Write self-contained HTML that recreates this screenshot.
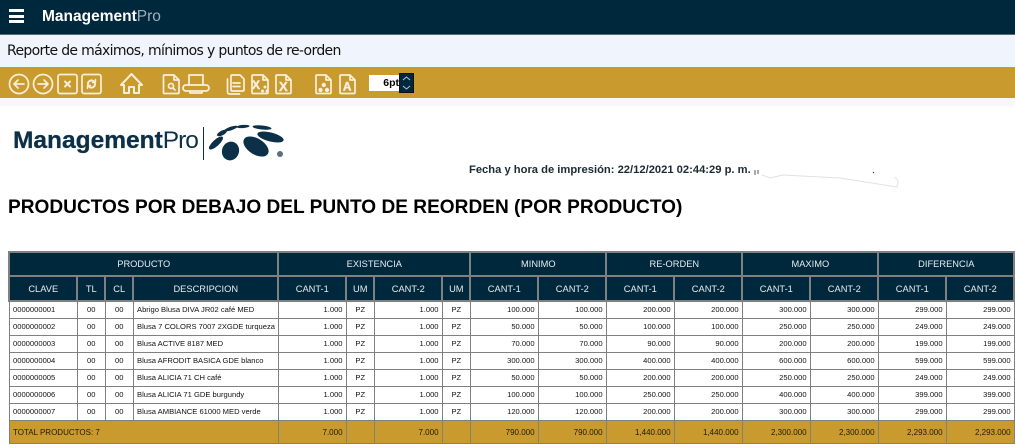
<!DOCTYPE html>
<html><head><meta charset="utf-8"><style>
html,body{margin:0;padding:0;background:#fff}
body{width:1015px;height:448px;overflow:hidden;position:relative;font-family:"Liberation Sans",sans-serif}
.a{position:absolute}
table{position:absolute;left:8px;top:251px;width:1005px;border-collapse:collapse;table-layout:fixed;font-size:7.6px;color:#111}
td,th{border:1px solid #808080;padding:0 3px 0 3.5px;overflow:hidden;white-space:nowrap;height:16px;line-height:16px}
th{background:#00283d;color:#e6ecef;font-weight:normal;font-size:9.3px;border:2px solid #808080;height:22px;text-align:center}
tr.h2 th{height:23px}
.c{text-align:center}.r{text-align:right}
tr.t td{background:#c99a2e;height:21px;padding-top:1px;color:#221b05;font-size:8px}
</style></head><body>
<div class="a" style="left:0;top:0;width:1015px;height:34px;background:#00283d"></div>
<div class="a" style="left:0;top:34px;width:1015px;height:1px;background:#5a6a75"></div>
<div class="a" style="left:0;top:35px;width:1015px;height:32px;background:#f0f4fc"></div>
<div class="a" style="left:0;top:67px;width:1015px;height:31px;background:#c99a2e"></div>
<div class="a" style="left:0;top:98px;width:1015px;height:8px;background:#f8f8f8"></div>
<div class="a" style="left:9px;top:9px;width:15px;height:3px;background:#fff;box-shadow:0 6px 0 #fff,0 11px 0 #fff"></div>
<div class="a" style="left:42px;top:8px;font-size:15.5px;line-height:18px;color:#fff;font-weight:bold;white-space:nowrap">Management<span style="font-weight:normal;color:#9fb0bb">Pro</span></div>
<div class="a" style="left:7px;top:42px;font-size:14px;line-height:18px;color:#111;white-space:nowrap;font-family:'DejaVu Sans',sans-serif;letter-spacing:-.66px">Reporte de máximos, mínimos y puntos de re-orden</div>

<svg class="a" style="left:0;top:67px" width="420" height="31" viewBox="0 67 420 31" fill="none" stroke="#f7efdc" stroke-width="1.7" stroke-linecap="round" stroke-linejoin="round">
<circle cx="19" cy="84" r="9.5"/><path d="M24 84H14M18 80l-4 4 4 4"/>
<circle cx="43" cy="84" r="9.5"/><path d="M38 84H48M44 80l4 4-4 4"/>
<rect x="58" y="74.500" width="19" height="19" rx="2"/><path d="M65 81.500l5 5M70 81.500l-5 5" stroke-width="2"/>
<rect x="82" y="74.500" width="19" height="19" rx="2"/><path d="M88 84a3.500 3.500 0 0 1 6-2.500M95 84a3.500 3.500 0 0 1-6 2.500" stroke-width="2"/><path d="M95.500 79.500v3h-3M87.500 88.500v-3h3" stroke-width="1.400"/>
<path d="M121 85l10.500-11 10.500 11h-3v8h-5v-6h-5v6h-5v-8z" stroke-width="2"/>
<path d="M164.500 75h9.500l5 5v12.500a1 1 0 0 1-1 1h-13.500a1 1 0 0 1-1-1v-16.500a1 1 0 0 1 1-1zM174 75v5h5"/><circle cx="171" cy="86" r="2.500"/><path d="M173 88l2 2"/>
<path d="M189 84v-9h14v9M186 85h20a2 2 0 0 1 0 6h-20a2 2 0 0 1 0-6zM190 91v2h12v-2" stroke-width="1.8"/>
<path d="M232 75h8l4 4v11a1 1 0 0 1-1 1h-11a1 1 0 0 1-1-1v-14a1 1 0 0 1 1-1zM227.500 79v13a2 2 0 0 0 2 2h10M233 83h7M233 86.500h7" stroke-width="1.7"/>
<path d="M253 75h10l5 5v12.500a1 1 0 0 1-1 1h-14a1 1 0 0 1-1-1v-16.500a1 1 0 0 1 1-1zM263 75v5h5"/>
<path d="M277 75h9l5 5v12.500a1 1 0 0 1-1 1h-13a1 1 0 0 1-1-1v-16.500a1 1 0 0 1 1-1zM286 75v5h5"/>
<path d="M317 75h9l5 5v12.500a1 1 0 0 1-1 1h-13a1 1 0 0 1-1-1v-16.500a1 1 0 0 1 1-1zM326 75v5h5"/>
<path d="M341 75h9l5 5v12.500a1 1 0 0 1-1 1h-13a1 1 0 0 1-1-1v-16.500a1 1 0 0 1 1-1zM350 75v5h5"/>
<g fill="#f7efdc" stroke="none"><circle cx="320.500" cy="90" r="2.200"/><circle cx="327" cy="90" r="2.200"/><circle cx="323.800" cy="85" r="2.200"/><circle cx="262.500" cy="91" r="1.500"/><circle cx="267" cy="91" r="1.500"/><circle cx="265" cy="87" r="1.500"/></g>
<g fill="#f7efdc" stroke="#f7efdc" stroke-width=".5" font-family="Liberation Sans" font-weight="bold"><text x="252" y="89" font-size="12">X</text><text x="279" y="91" font-size="13">X</text><text x="343" y="90.500" font-size="11.500">A</text></g>
</svg>
<div class="a" style="left:369px;top:75px;width:30px;height:16px;background:#fff;font-size:10.5px;font-weight:bold;line-height:16px;text-align:right;color:#000">6pt</div>
<svg class="a" style="left:399px;top:73px" width="15" height="20" viewBox="0 0 15 20"><rect width="15" height="20" fill="#00283d"/><rect x=".5" y=".5" width="14" height="19" fill="none" stroke="#111"/><path d="M4 7l3.500-3 3.500 3M4 13l3.500 3 3.500-3" fill="none" stroke="#b8c4cc"/></svg>

<div class="a" style="left:13px;top:123px;font-size:24.5px;line-height:36px;color:#0c3047;font-weight:bold;white-space:nowrap;-webkit-text-stroke:.3px #0c3047">Management<span style="font-weight:normal;letter-spacing:-1px;-webkit-text-stroke:0">Pro</span></div>
<svg class="a" style="left:200px;top:120px" width="95" height="45" viewBox="200 120 95 45" fill="#0c3047">
<rect x="203" y="127" width="1" height="33"/>
<ellipse cx="230.500" cy="151" rx="8.500" ry="9.500" transform="rotate(20 230.500 151)"/>
<ellipse cx="256" cy="146.500" rx="14" ry="8" transform="rotate(32 256 146.500)"/>
<ellipse cx="270.500" cy="137" rx="13.500" ry="4.500" transform="rotate(14 270.500 137)"/>
<ellipse cx="262" cy="127.500" rx="9.500" ry="2" transform="rotate(6 262 127.500)"/>
<ellipse cx="243" cy="126.500" rx="6.500" ry="1.600" transform="rotate(-4 243 126.500)"/>
<ellipse cx="231" cy="128.500" rx="7" ry="1.800" transform="rotate(-18 231 128.500)"/>
<ellipse cx="222" cy="133" rx="5.500" ry="2.300" transform="rotate(-28 222 133)"/>
<ellipse cx="216" cy="143" rx="9" ry="3.200" transform="rotate(-42 216 143)"/>
<circle cx="280" cy="154" r="3" fill="#5a7080"/>
</svg>
<div class="a" style="left:469px;top:163px;font-size:11.2px;font-weight:bold;line-height:14px;color:#1c2a33;white-space:nowrap">Fecha y hora de impresión: 22/12/2021 02:44:29 p. m.</div>
<svg class="a" style="left:750px;top:165px" width="150" height="26" viewBox="750 165 150 26" fill="none" stroke="#e2e2e2"><path d="M762 175l8 3 13-3 57 3 57 9 1-6-3-4"/><path d="M755 170v5M758 170v4" stroke="#555"/><path d="M873 172l1 1" stroke="#333"/></svg>
<div class="a" style="left:8px;top:197px;font-size:19.1px;font-weight:bold;line-height:22px;color:#000;white-space:nowrap">PRODUCTOS POR DEBAJO DEL PUNTO DE REORDEN (POR PRODUCTO)</div>

<table>
<colgroup><col style="width:68px"><col style="width:28px"><col style="width:28px"><col style="width:145px"><col style="width:68px"><col style="width:28px"><col style="width:68px"><col style="width:28px"><col style="width:68px"><col style="width:68px"><col style="width:68px"><col style="width:68px"><col style="width:68px"><col style="width:68px"><col style="width:68px"><col style="width:68px"></colgroup>
<tr><th colspan="4">PRODUCTO</th><th colspan="4">EXISTENCIA</th><th colspan="2">MINIMO</th><th colspan="2">RE-ORDEN</th><th colspan="2">MAXIMO</th><th colspan="2">DIFERENCIA</th></tr>
<tr class="h2"><th>CLAVE</th><th>TL</th><th>CL</th><th>DESCRIPCION</th><th>CANT-1</th><th>UM</th><th>CANT-2</th><th>UM</th><th>CANT-1</th><th>CANT-2</th><th>CANT-1</th><th>CANT-2</th><th>CANT-1</th><th>CANT-2</th><th>CANT-1</th><th>CANT-2</th></tr>
<tr><td>0000000001</td><td class="c">00</td><td class="c">00</td><td>Abrigo Blusa DIVA JR02 café MED</td><td class="r">1.000</td><td class="c">PZ</td><td class="r">1.000</td><td class="c">PZ</td><td class="r">100.000</td><td class="r">100.000</td><td class="r">200.000</td><td class="r">200.000</td><td class="r">300.000</td><td class="r">300.000</td><td class="r">299.000</td><td class="r">299.000</td></tr>
<tr><td>0000000002</td><td class="c">00</td><td class="c">00</td><td>Blusa 7 COLORS 7007 2XGDE turqueza</td><td class="r">1.000</td><td class="c">PZ</td><td class="r">1.000</td><td class="c">PZ</td><td class="r">50.000</td><td class="r">50.000</td><td class="r">100.000</td><td class="r">100.000</td><td class="r">250.000</td><td class="r">250.000</td><td class="r">249.000</td><td class="r">249.000</td></tr>
<tr><td>0000000003</td><td class="c">00</td><td class="c">00</td><td>Blusa ACTIVE 8187 MED</td><td class="r">1.000</td><td class="c">PZ</td><td class="r">1.000</td><td class="c">PZ</td><td class="r">70.000</td><td class="r">70.000</td><td class="r">90.000</td><td class="r">90.000</td><td class="r">200.000</td><td class="r">200.000</td><td class="r">199.000</td><td class="r">199.000</td></tr>
<tr><td>0000000004</td><td class="c">00</td><td class="c">00</td><td>Blusa AFRODIT BASICA GDE blanco</td><td class="r">1.000</td><td class="c">PZ</td><td class="r">1.000</td><td class="c">PZ</td><td class="r">300.000</td><td class="r">300.000</td><td class="r">400.000</td><td class="r">400.000</td><td class="r">600.000</td><td class="r">600.000</td><td class="r">599.000</td><td class="r">599.000</td></tr>
<tr><td>0000000005</td><td class="c">00</td><td class="c">00</td><td>Blusa ALICIA 71 CH café</td><td class="r">1.000</td><td class="c">PZ</td><td class="r">1.000</td><td class="c">PZ</td><td class="r">50.000</td><td class="r">50.000</td><td class="r">200.000</td><td class="r">200.000</td><td class="r">250.000</td><td class="r">250.000</td><td class="r">249.000</td><td class="r">249.000</td></tr>
<tr><td>0000000006</td><td class="c">00</td><td class="c">00</td><td>Blusa ALICIA 71 GDE burgundy</td><td class="r">1.000</td><td class="c">PZ</td><td class="r">1.000</td><td class="c">PZ</td><td class="r">100.000</td><td class="r">100.000</td><td class="r">250.000</td><td class="r">250.000</td><td class="r">400.000</td><td class="r">400.000</td><td class="r">399.000</td><td class="r">399.000</td></tr>
<tr><td>0000000007</td><td class="c">00</td><td class="c">00</td><td>Blusa AMBIANCE 61000 MED verde</td><td class="r">1.000</td><td class="c">PZ</td><td class="r">1.000</td><td class="c">PZ</td><td class="r">120.000</td><td class="r">120.000</td><td class="r">200.000</td><td class="r">200.000</td><td class="r">300.000</td><td class="r">300.000</td><td class="r">299.000</td><td class="r">299.000</td></tr>
<tr class="t"><td colspan="4">TOTAL PRODUCTOS: 7</td><td class="r">7.000</td><td></td><td class="r">7.000</td><td></td><td class="r">790.000</td><td class="r">790.000</td><td class="r">1,440.000</td><td class="r">1,440.000</td><td class="r">2,300.000</td><td class="r">2,300.000</td><td class="r">2,293.000</td><td class="r">2,293.000</td></tr>
</table>
</body></html>
